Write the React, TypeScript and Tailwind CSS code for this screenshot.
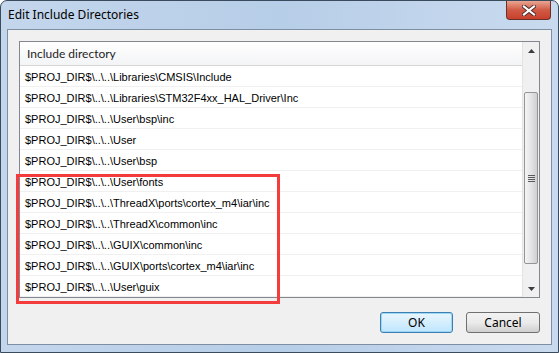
import React from "react";

const rows = [
  "$PROJ_DIR$\\..\\..\\Libraries\\CMSIS\\Include",
  "$PROJ_DIR$\\..\\..\\Libraries\\STM32F4xx_HAL_Driver\\Inc",
  "$PROJ_DIR$\\..\\..\\User\\bsp\\inc",
  "$PROJ_DIR$\\..\\..\\User",
  "$PROJ_DIR$\\..\\..\\User\\bsp",
  "$PROJ_DIR$\\..\\..\\User\\fonts",
  "$PROJ_DIR$\\..\\..\\ThreadX\\ports\\cortex_m4\\iar\\inc",
  "$PROJ_DIR$\\..\\..\\ThreadX\\common\\inc",
  "$PROJ_DIR$\\..\\..\\GUIX\\common\\inc",
  "$PROJ_DIR$\\..\\..\\GUIX\\ports\\cortex_m4\\iar\\inc",
  "$PROJ_DIR$\\..\\..\\User\\guix",
];

const CloseButton = () => (
  <div className="absolute right-[1px] top-0 flex h-[19px] w-[45px] items-center justify-center rounded-b-[4px] border border-t-0 border-[#6b2f2a] bg-gradient-to-b from-[#e8a592] via-[#d15a45] to-[#c8402c]">
    <svg width="14" height="11" viewBox="0 0 14 11">
      <path
        d="M2 1.5 L12 9.5 M12 1.5 L2 9.5"
        stroke="#4a2a2a"
        strokeWidth="4"
        strokeLinecap="square"
      />
      <path
        d="M2 1.5 L12 9.5 M12 1.5 L2 9.5"
        stroke="#ffffff"
        strokeWidth="2.2"
        strokeLinecap="square"
      />
    </svg>
  </div>
);

const Scrollbar = () => (
  <div className="flex w-[17px] flex-col border-l border-[#e3e3e3] bg-[#f0f0f0]">
    <div className="flex h-[17px] items-center justify-center">
      <svg width="7" height="4" viewBox="0 0 7 4">
        <path d="M3.5 0 L7 4 L0 4 Z" fill="#3c3c3c" />
      </svg>
    </div>
    <div className="h-[33px]" />
    <div className="mx-[1px] flex h-[172px] items-center justify-center rounded-[2px] border border-[#959595] bg-gradient-to-r from-[#f4f4f4] via-[#e4e4e4] to-[#cfcfcf]">
      <div className="flex flex-col gap-[1px]">
        <div className="h-px w-[7px] bg-[#5a5a5a]" />
        <div className="h-px w-[7px] bg-[#5a5a5a]" />
        <div className="h-px w-[7px] bg-[#5a5a5a]" />
        <div className="h-px w-[7px] bg-[#5a5a5a]" />
      </div>
    </div>
    <div className="flex-1" />
    <div className="flex h-[17px] items-center justify-center">
      <svg width="7" height="4" viewBox="0 0 7 4">
        <path d="M0 0 L7 0 L3.5 4 Z" fill="#3c3c3c" />
      </svg>
    </div>
  </div>
);

export default function App() {
  return (
    <div className="relative h-[353px] w-[559px] overflow-hidden bg-white">
      <div className="flex h-full w-full flex-col rounded-t-[7px] border border-[#3b4b5e] bg-gradient-to-r from-[#c3d6ec] via-[#b7cee8] to-[#c9daee] px-[6px] pb-[7px]">
        <div className="relative flex h-[28px] items-center pl-[1px] text-[12px] text-black [font-family:'Noto_Sans',sans-serif]">
          Edit Include Directories
          <CloseButton />
        </div>
        <div className="flex flex-1 flex-col border border-[#7f8fa3] bg-[#f0f0f0] px-[11px] pt-[11px]">
          <div className="flex h-[257px] border border-[#828790] bg-white">
            <div className="flex flex-1 flex-col">
              <div className="flex h-[24px] items-center border-b border-[#d5d5d5] bg-gradient-to-b from-white to-[#f3f4f6] pl-[7px] pt-[1px] text-[12px] text-[#1e1e1e] [font-family:Lato,sans-serif]">
                Include directory
              </div>
              {rows.map((r) => (
                <div
                  key={r}
                  className="flex h-[21px] items-center border-b border-[#f0f0f0] pl-[5px] pt-[3px] text-[11px] text-black [font-family:'Liberation_Sans',sans-serif]"
                >
                  {r}
                </div>
              ))}
            </div>
            <Scrollbar />
          </div>
          <div className="mt-[14px] flex justify-end gap-[13px]">
            <button className="h-[21px] w-[73px] rounded-[3px] border border-[#3c7fb1] bg-gradient-to-b from-[#eaf6fd] to-[#bee6fd] text-[12px] text-black shadow-[inset_0_0_0_1px_#9ed6f5] [font-family:'Noto_Sans',sans-serif]">
              OK
            </button>
            <button className="h-[21px] w-[74px] rounded-[3px] border border-[#707070] bg-gradient-to-b from-[#f2f2f2] via-[#ebebeb] to-[#cfcfcf] text-[12px] text-black [font-family:'Noto_Sans',sans-serif]">
              Cancel
            </button>
          </div>
        </div>
      </div>
      <div className="absolute left-[16px] top-[174px] h-[130px] w-[264px] border-[3px] border-[#f43c3c]" />
    </div>
  );
}
